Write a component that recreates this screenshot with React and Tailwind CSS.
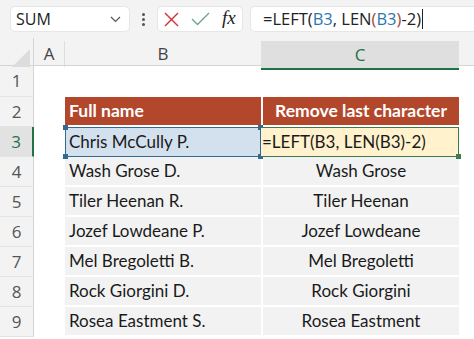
const ui = { fontFamily: '"Open Sans", "Noto Sans", sans-serif' };
const cell = { fontFamily: 'Lato, "Open Sans", sans-serif' };

const rows = [
  ["Wash Grose D.", "Wash Grose"],
  ["Tiler Heenan R.", "Tiler Heenan"],
  ["Jozef Lowdeane P.", "Jozef Lowdeane"],
  ["Mel Bregoletti B.", "Mel Bregoletti"],
  ["Rock Giorgini D.", "Rock Giorgini"],
  ["Rosea Eastment S.", "Rosea Eastment"],
];

const RowHead = ({ n, active = false, h = "h-[30px]" }) => (
  <div
    style={ui}
    className={`${h} flex items-center justify-center text-[17px] border-b border-[#e3e3e3] ${
      active
        ? "bg-[#e2e2e2] text-[#217346] border-r-2 border-r-[#217346]"
        : "bg-[#f3f3f3] text-[#555] border-r border-r-[#d4d4d4]"
    }`}
  >
    {n}
  </div>
);

const Toolbar = () => (
  <div className="h-[38px] bg-[#f3f3f3] flex items-center pl-[10px] gap-0">
    <div className="w-[120px] h-[26px] bg-white rounded-[5px] border border-[#e6e6e6] flex items-center justify-between pl-[5px] pr-[8px]">
      <span style={ui} className="text-[16px] text-[#222] leading-none">SUM</span>
      <svg width="11" height="7" viewBox="0 0 11 7">
        <polyline points="1,1 5.5,5.5 10,1" fill="none" stroke="#555" strokeWidth="1.2" />
      </svg>
    </div>
    <div className="w-[27px] flex flex-col items-center gap-[2px]">
      <span className="w-[3px] h-[3px] rounded-full bg-[#555]" />
      <span className="w-[3px] h-[3px] rounded-full bg-[#555]" />
      <span className="w-[3px] h-[3px] rounded-full bg-[#555]" />
    </div>
    <div className="w-[86px] h-[26px] bg-white rounded-[5px] border border-[#e6e6e6] flex items-center pl-[6px] gap-[12px]">
      <svg width="15" height="15" viewBox="0 0 15 15">
        <line x1="1" y1="1" x2="14" y2="14" stroke="#d1343a" strokeWidth="1.4" />
        <line x1="14" y1="1" x2="1" y2="14" stroke="#d1343a" strokeWidth="1.4" />
      </svg>
      <svg width="19" height="14" viewBox="0 0 19 14">
        <polyline points="1,7 6.5,12.5 18,1" fill="none" stroke="#6ea58a" strokeWidth="1.4" />
      </svg>
      <span className="text-[19px] italic text-[#222] leading-none -mt-[3px]" style={{ fontFamily: '"Liberation Serif", serif' }}>
        fx
      </span>
    </div>
    <div className="ml-[7px] flex-1 h-[26px] bg-white rounded-l-[5px] border border-r-0 border-[#e6e6e6] flex items-center pl-[12px]">
      <span style={ui} className="text-[16.5px] text-[#222] leading-none whitespace-nowrap">
        =LEFT(<span className="text-[#2f75b0]">B3</span>, LEN<span className="text-[#a0453a]">(</span>
        <span className="text-[#2f75b0]">B3</span>
        <span className="text-[#a0453a]">)</span>-2)
      </span>
      <span className="w-px h-[20px] bg-[#222] ml-[1px]" />
    </div>
  </div>
);

const ColHeads = () => (
  <div className="grid grid-cols-[34px_31px_196px_198px_15px] h-[28px] bg-[#f3f3f3] border-b border-[#d4d4d4]" style={ui}>
    <div className="relative border-r border-[#d4d4d4]">
      <svg className="absolute right-[3px] bottom-[3px]" width="18" height="18" viewBox="0 0 18 18">
        <polygon points="18,0 18,18 0,18" fill="#dcdcdc" />
      </svg>
    </div>
    <div className="flex items-center justify-center text-[17px] text-[#444] border-r border-[#dedede] my-[3px]">A</div>
    <div className="flex items-center justify-center text-[17px] text-[#444]">B</div>
    <div className="flex items-center justify-center text-[17px] text-[#217346] bg-[#dfdfdf] border-b-2 border-[#217346] mt-[3px]">C</div>
    <div />
  </div>
);

export default function App() {
  return (
    <div className="w-[474px] h-[339px] bg-white overflow-hidden">
      <Toolbar />
      <ColHeads />
      <div className="grid grid-cols-[34px_31px_196px_198px_15px]">
        <RowHead n={1} h="h-[31px]" />
        <div className="col-span-4" />

        <RowHead n={2} />
        <div />
        <div className="h-[30px] border-b-2 border-white">
          <div style={cell} className="h-full bg-[#b3472c] text-white font-bold text-[17.5px] flex items-center pl-[4px]">
            Full name
          </div>
        </div>
        <div className="h-[30px] border-b-2 border-l-2 border-white">
          <div style={cell} className="h-full bg-[#b3472c] text-white font-bold text-[17.5px] flex items-center justify-center">
            Remove last character
          </div>
        </div>
        <div />

        <RowHead n={3} active />
        <div />
        <div className="h-[30px] relative bg-[#d3e1ee] border border-[#33698f] flex items-center pl-[3px]">
          <span style={cell} className="text-[17px] text-[#1a1a1a]">Chris McCully P.</span>
          <span className="absolute -left-[3px] -top-[3px] w-[5px] h-[5px] bg-[#33698f]" />
          <span className="absolute -left-[3px] -bottom-[3px] w-[5px] h-[5px] bg-[#33698f]" />
          <span className="absolute -right-[3px] -top-[3px] w-[5px] h-[5px] bg-[#33698f]" />
          <span className="absolute -right-[3px] -bottom-[3px] w-[5px] h-[5px] bg-[#33698f]" />
        </div>
        <div className="h-[30px] relative bg-[#fff2cc] border border-l-0 border-[#3f7a52] flex items-center pl-[1px]">
          <span style={cell} className="text-[17px] text-[#1a1a1a] whitespace-nowrap">=LEFT(B3, LEN(B3)-2)</span>
          <span className="absolute -right-[3px] -bottom-[3px] w-[5px] h-[5px] bg-[#3f7a52]" />
        </div>
        <div />

        {rows.map(([full, trimmed], i) => (
          <div key={full} className="contents">
            <RowHead n={i + 4} />
            <div />
            <div className="h-[30px] bg-[#f2f2f2] border-b-2 border-white flex items-center pl-[4px]">
              <span style={cell} className="text-[17px] text-[#1a1a1a] whitespace-nowrap">{full}</span>
            </div>
            <div className="h-[30px] bg-[#f2f2f2] border-b-2 border-l-2 border-white flex items-center justify-center">
              <span style={cell} className="text-[17px] text-[#1a1a1a] whitespace-nowrap">{trimmed}</span>
            </div>
            <div />
          </div>
        ))}
      </div>
    </div>
  );
}
